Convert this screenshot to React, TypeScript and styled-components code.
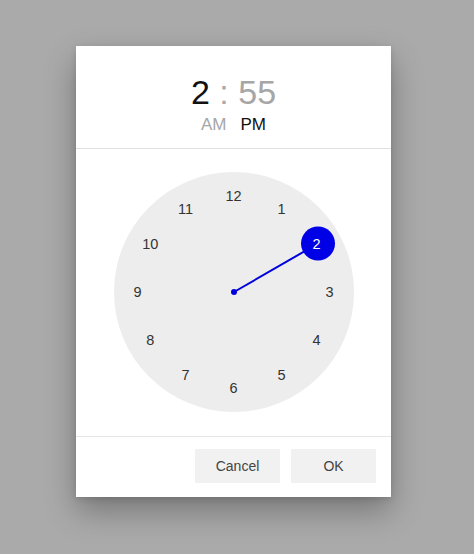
import styled, { createGlobalStyle } from "styled-components";

const GlobalStyle = createGlobalStyle`
  html, body {
    margin: 0;
    padding: 0;
    background: #aaaaaa;
    font-family: "Liberation Sans", Arial, sans-serif;
  }
`;

const Page = styled.div`
  width: 474px;
  height: 554px;
  display: flex;
  align-items: flex-start;
  padding: 46px 0 0 76px;
  box-sizing: border-box;
  background: #aaaaaa;
`;

const Dialog = styled.div`
  width: 315px;
  height: 451px;
  background: #fff;
  display: flex;
  flex-direction: column;
  box-shadow: 0 14px 30px rgba(0, 0, 0, 0.3), 0 2px 6px rgba(0, 0, 0, 0.12);
`;

const Header = styled.div`
  height: 103px;
  border-bottom: 1px solid #e0e0e0;
  display: flex;
  flex-direction: column;
  align-items: center;
  padding-top: 26px;
  box-sizing: border-box;
`;

const Time = styled.div`
  font-size: 34px;
  line-height: 40px;
  white-space: pre;
  color: #aaa;
`;

const Part = styled.span<{ $active?: boolean }>`
  color: ${(p) => (p.$active ? "#111" : "#a6a6a6")};
`;

const Meridiem = styled.div`
  display: flex;
  gap: 14px;
  font-size: 17px;
  line-height: 20px;
  margin-top: 3px;
`;

const Body = styled.div`
  height: 287px;
  display: flex;
  justify-content: center;
  padding-top: 23px;
  box-sizing: border-box;
`;

const Face = styled.div`
  position: relative;
  width: 240px;
  height: 240px;
  border-radius: 50%;
  background: #ededed;
`;

const Hand = styled.svg`
  position: absolute;
  left: 0;
  top: 0;
`;

const Num = styled.span<{ $selected?: boolean }>`
  position: absolute;
  width: 30px;
  height: 20px;
  margin: -10px 0 0 -15px;
  text-align: center;
  font-size: 14.5px;
  line-height: 20px;
  color: ${(p) => (p.$selected ? "#fff" : "#333")};
`;

const Footer = styled.div`
  flex: 1;
  border-top: 1px solid #e6e6e6;
  display: flex;
  justify-content: flex-end;
  align-items: flex-start;
  gap: 11px;
  padding: 12px 15px 0 0;
`;

const Button = styled.button`
  width: 85px;
  height: 34px;
  border: none;
  background: #f1f1f1;
  color: #444;
  font-family: "Liberation Sans", Arial, sans-serif;
  font-size: 14px;
  cursor: pointer;
`;

const C = 120;
const R = 96;
const selected = 2;

export default function App() {
  const pos = (h: number, r: number) => {
    const a = (h * 30 * Math.PI) / 180;
    return { x: C + r * Math.sin(a), y: C - r * Math.cos(a) };
  };
  const sel = pos(selected, R + 1);

  return (
    <Page>
      <GlobalStyle />
      <Dialog>
        <Header>
          <Time>
            <Part $active>2</Part>
            <span> : </span>
            <Part>55</Part>
          </Time>
          <Meridiem>
            <Part>AM</Part>
            <Part $active>PM</Part>
          </Meridiem>
        </Header>
        <Body>
          <Face>
            <Hand width={240} height={240}>
              <line x1={C} y1={C} x2={sel.x} y2={sel.y} stroke="#0000dd" strokeWidth={2} />
              <circle cx={C} cy={C} r={3} fill="#0000dd" />
              <circle cx={sel.x} cy={sel.y} r={17} fill="#0000e6" />
            </Hand>
            {Array.from({ length: 12 }, (_, i) => {
              const h = i + 1;
              const p = pos(h, R);
              return (
                <Num key={h} $selected={h === selected} style={{ left: p.x, top: p.y }}>
                  {h}
                </Num>
              );
            })}
          </Face>
        </Body>
        <Footer>
          <Button>Cancel</Button>
          <Button>OK</Button>
        </Footer>
      </Dialog>
    </Page>
  );
}
